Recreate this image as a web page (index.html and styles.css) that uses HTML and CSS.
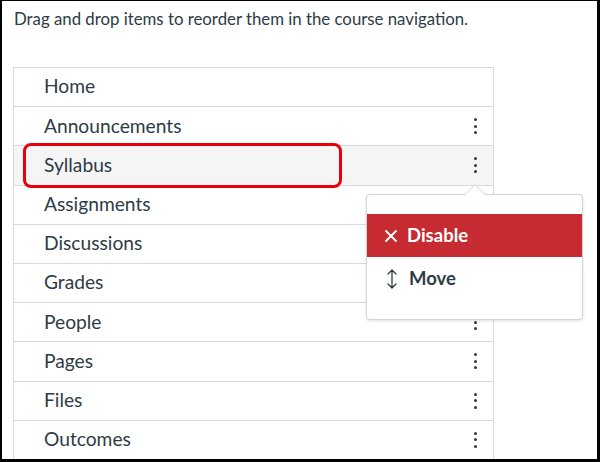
FILE: index.html
```html
<!DOCTYPE html>
<html>
<head>
<meta charset="utf-8">
<link rel="stylesheet" href="styles.css">
</head>
<body>
<div class="frame">
  <p class="intro">Drag and drop items to reorder them in the course navigation.</p>
  <ul class="nav-list">
    <li class="nav-item"><span class="label">Home</span></li>
    <li class="nav-item"><span class="label">Announcements</span><span class="kebab"><i></i><i></i><i></i></span></li>
    <li class="nav-item active"><span class="label">Syllabus</span><span class="kebab"><i></i><i></i><i></i></span><span class="highlight"></span></li>
    <li class="nav-item"><span class="label">Assignments</span><span class="kebab"><i></i><i></i><i></i></span></li>
    <li class="nav-item"><span class="label">Discussions</span><span class="kebab"><i></i><i></i><i></i></span></li>
    <li class="nav-item"><span class="label">Grades</span><span class="kebab"><i></i><i></i><i></i></span></li>
    <li class="nav-item"><span class="label">People</span><span class="kebab"><i></i><i></i><i></i></span></li>
    <li class="nav-item"><span class="label">Pages</span><span class="kebab"><i></i><i></i><i></i></span></li>
    <li class="nav-item"><span class="label">Files</span><span class="kebab"><i></i><i></i><i></i></span></li>
    <li class="nav-item"><span class="label">Outcomes</span><span class="kebab"><i></i><i></i><i></i></span></li>
  </ul>
  <div class="popover">
    <span class="caret"></span>
    <div class="menu-item danger">
      <svg class="icon" width="14" height="14" viewBox="0 0 14 14"><path d="M1.5 1.5 L12.5 12.5 M12.5 1.5 L1.5 12.5" stroke="#fff" stroke-width="1.8" fill="none"/></svg>
      <span>Disable</span>
    </div>
    <div class="menu-item">
      <svg class="icon move" width="12" height="22" viewBox="0 0 12 22"><path d="M6 2 V20 M2 6 L6 2 L10 6 M2 16 L6 20 L10 16" stroke="#2d3b45" stroke-width="1.3" fill="none" stroke-linecap="round" stroke-linejoin="round"/></svg>
      <span>Move</span>
    </div>
  </div>
</div>
</body>
</html>
```

FILE: styles.css
```css
* { box-sizing: border-box; }
html, body { margin: 0; padding: 0; background: #fff; }
.frame {
  position: relative;
  width: 600px;
  height: 462px;
  overflow: hidden;
  border-style: solid;
  border-color: #000;
  border-width: 1px 3px 3px 2px;
  font-family: Lato, "Liberation Sans", sans-serif;
  color: #2d3b45;
}
.intro {
  margin: 0;
  padding: 8px 0 0 12px;
  font-size: 16.8px;
  line-height: 20px;
}
.nav-list {
  list-style: none;
  margin: 38px 0 0 11px;
  padding: 0;
  width: 481px;
  border: 1px solid #d7dadd;
  border-bottom: none;
}
.nav-item {
  position: relative;
  display: flex;
  align-items: center;
  justify-content: space-between;
  height: 39.2px;
  padding: 0 16px 0 30px;
  border-bottom: 1px solid #d7dadd;
  font-size: 19.2px;
}
.nav-item.active { background: #f5f5f5; }
.label { line-height: 1; margin-top: -2px; }
.kebab {
  display: flex;
  flex-direction: column;
  gap: 3.5px;
}
.kebab i {
  display: block;
  width: 3px;
  height: 3px;
  border-radius: 50%;
  background: #2d3b45;
}
.highlight {
  position: absolute;
  left: 9px;
  top: -3px;
  width: 319px;
  height: 45px;
  border: 3px solid #e8000b;
  border-radius: 8px;
}
.popover {
  position: absolute;
  left: 364px;
  top: 193px;
  width: 217px;
  height: 126px;
  background: #fff;
  border: 1px solid #d0d5d8;
  border-radius: 4px;
  box-shadow: 0 1px 3px rgba(0,0,0,0.12);
  padding-top: 19px;
}
.caret {
  position: absolute;
  left: 97px;
  top: -11px;
  width: 0;
  height: 0;
  border-left: 11px solid transparent;
  border-right: 11px solid transparent;
  border-bottom: 11px solid #d0d5d8;
}
.caret::after {
  content: "";
  position: absolute;
  left: -10px;
  top: 1px;
  border-left: 10px solid transparent;
  border-right: 10px solid transparent;
  border-bottom: 10px solid #fff;
}
.menu-item {
  display: flex;
  align-items: center;
  height: 43px;
  padding-left: 17px;
  font-size: 18.5px;
  font-weight: 700;
  color: #2d3b45;
}
.menu-item span { margin-top: -2px; }
.menu-item.danger {
  background: #c52b30;
  color: #fff;
}
.icon { flex: none; margin-right: 9px; }
.icon.move { margin-left: 2px; margin-right: 11px; }
```
